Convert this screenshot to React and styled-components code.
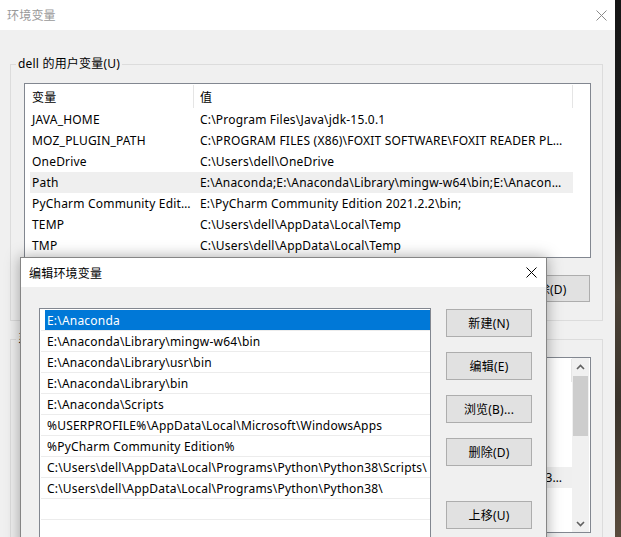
import React from 'react';
import styled, { createGlobalStyle } from 'styled-components';

const FONT = `"Noto Sans", "Noto Sans CJK SC", sans-serif`;

const Global = createGlobalStyle`
  html, body { margin: 0; padding: 0; }
  body { background: #2b2722; font-family: ${FONT}; font-size: 12px; letter-spacing: 0.2px; color: #000; }
  * { box-sizing: border-box; }
`;

const Desktop = styled.div`
  position: relative;
  width: 621px;
  height: 537px;
  overflow: hidden;
  display: flex;
  background: linear-gradient(180deg, #161616 0%, #1e1e1e 35%, #4a4136 55%, #3a332b 75%, #5a4c3d 100%);
`;

const MainWindow = styled.div`
  width: 615px;
  height: 537px;
  flex: none;
  background: #f0f0f0;
  display: flex;
  flex-direction: column;
`;

const TitleBar = styled.div`
  height: ${p => p.$h}px;
  flex: none;
  background: #fff;
  display: flex;
  align-items: center;
  justify-content: space-between;
  padding: 0 ${p => p.$pr}px 0 ${p => p.$pl}px;
  color: ${p => (p.$active ? '#000' : '#999')};
  font-size: 12px;
`;

const CloseGlyph = ({ color }) => (
  <svg width="11" height="11" viewBox="0 0 11 11">
    <path d="M0.5 0.5 L10.5 10.5 M10.5 0.5 L0.5 10.5" stroke={color} strokeWidth="1" fill="none" />
  </svg>
);

const MainBody = styled.div`
  flex: 1;
  display: flex;
  flex-direction: column;
  padding: 34px 12px 0 10px;
`;

const GroupBox = styled.div`
  margin-top: ${p => p.$mt}px;
  border: 1px solid #dcdcdc;
  padding: 0 11px ${p => p.$pb}px 13px;
  display: flex;
  flex-direction: column;
  flex: none;
`;

const GroupLabel = styled.div`
  align-self: flex-start;
  margin: -9px 0 0 -8px;
  padding: 0 2px;
  line-height: 16px;
  background: #f0f0f0;
`;

const ListBox = styled.div`
  margin-top: ${p => p.$mt}px;
  height: ${p => p.$h}px;
  border: 1px solid #828790;
  background: #fff;
  display: flex;
  overflow: hidden;
  flex: none;
`;

const ListContent = styled.div`
  flex: 1;
  min-width: 0;
  padding-left: 5px;
  display: flex;
  flex-direction: column;
`;

const Header = styled.div`
  height: 25px;
  flex: none;
  display: flex;
  align-items: center;
`;

const HeaderCell = styled.div`
  width: ${p => p.$w}px;
  height: 23px;
  padding-left: ${p => p.$pl}px;
  border-right: 1px solid #e5e5e5;
  display: flex;
  align-items: center;
`;

const VarRow = styled.div`
  height: 21px;
  flex: none;
  display: flex;
  align-items: center;
  align-self: flex-start;
  background: ${p => (p.$hl ? '#efefef' : 'transparent')};
`;

const Cell = styled.div`
  width: ${p => p.$w}px;
  padding-left: ${p => p.$pl}px;
  padding-right: ${p => p.$pr}px;
  white-space: nowrap;
  overflow: hidden;
  text-overflow: ellipsis;
`;

const ButtonRow = styled.div`
  margin-top: 17px;
  display: flex;
  justify-content: flex-end;
  padding-right: 1px;
`;

const WinButton = styled.button`
  width: ${p => p.$w}px;
  height: ${p => p.$h}px;
  margin-top: ${p => p.$mt || 0}px;
  border: 1px solid #adadad;
  background: #e1e1e1;
  font-family: ${FONT};
  font-size: 12px;
  letter-spacing: 0.2px;
  color: #000;
  padding: 0;
  flex: none;
`;

const ScrollBar = styled.div`
  width: 17px;
  flex: none;
  margin-right: 1px;
  background: #f0f0f0;
  display: flex;
  flex-direction: column;
`;

const ScrollArrow = styled.div`
  height: 17px;
  flex: none;
  display: flex;
  align-items: center;
  justify-content: center;
`;

const ScrollThumb = styled.div`
  height: 60px;
  margin: 1px 1px 0;
  background: #cdcdcd;
  flex: none;
`;

const ScrollTrack = styled.div`
  flex: 1;
`;

const Chevron = ({ up }) => (
  <svg width="9" height="6" viewBox="0 0 9 6">
    <path d={up ? 'M1 5 L4.5 1.5 L8 5' : 'M1 1 L4.5 4.5 L8 1'} stroke="#606060" strokeWidth="1.6" fill="none" />
  </svg>
);

const Dialog = styled.div`
  position: absolute;
  left: 20px;
  top: 257px;
  width: 527px;
  height: 310px;
  border: 1px solid #858585;
  background: #f0f0f0;
  box-shadow: 0 0 14px rgba(0, 0, 0, 0.35);
  display: flex;
  flex-direction: column;
`;

const DialogBody = styled.div`
  flex: 1;
  min-height: 0;
  display: flex;
  gap: 15px;
  padding: 21px 14px 0 18px;
`;

const PathList = styled.div`
  width: 392px;
  height: 250px;
  flex: none;
  border: 1px solid #828790;
  background: #fff;
  padding: 1px 0 0 1px;
  display: flex;
  flex-direction: column;
  overflow: hidden;
`;

const PathRow = styled.div`
  height: 21px;
  flex: none;
  padding-left: 4px;
  border-bottom: 1px solid #ececec;
  display: flex;
`;

const PathText = styled.div`
  flex: 1;
  padding-left: 2px;
  display: flex;
  align-items: center;
  white-space: nowrap;
  overflow: hidden;
  background: ${p => (p.$sel ? '#0078d7' : 'transparent')};
  color: ${p => (p.$sel ? '#fff' : '#000')};
`;

const ButtonCol = styled.div`
  width: 86px;
  flex: none;
  display: flex;
  flex-direction: column;
  gap: 15px;
  padding-top: 1px;
`;

const userVars = [
  ['JAVA_HOME', 'C:\\Program Files\\Java\\jdk-15.0.1'],
  ['MOZ_PLUGIN_PATH', 'C:\\PROGRAM FILES (X86)\\FOXIT SOFTWARE\\FOXIT READER PLUGINS\\'],
  ['OneDrive', 'C:\\Users\\dell\\OneDrive'],
  ['Path', 'E:\\Anaconda;E:\\Anaconda\\Library\\mingw-w64\\bin;E:\\Anaconda\\Library\\usr\\bin;'],
  ['PyCharm Community Edition', 'E:\\PyCharm Community Edition 2021.2.2\\bin;'],
  ['TEMP', 'C:\\Users\\dell\\AppData\\Local\\Temp'],
  ['TMP', 'C:\\Users\\dell\\AppData\\Local\\Temp'],
];

const sysVars = [
  ['ComSpec', 'C:\\WINDOWS\\system32\\cmd.exe'],
  ['DriverData', 'C:\\Windows\\System32\\Drivers\\DriverData'],
  ['NUMBER_OF_PROCESSORS', '8'],
  ['OS', 'Windows_NT'],
  ['Path', 'C:\\WINDOWS\\system32;C:\\WINDOWS;C:\\WINDOWS\\System32\\Wbem;C:\\WINDOWS\\System32\\WindowsPowerShell\\v1.0\\'],
  ['PATHEXT', '.COM;.EXE;.BAT;.CMD;.VBS;.VBE;.JS;.JSE;.WSF;.WSH;.MSC'],
  ['PROCESSOR_ARCHITECTURE', 'AMD64'],
];

const paths = [
  'E:\\Anaconda',
  'E:\\Anaconda\\Library\\mingw-w64\\bin',
  'E:\\Anaconda\\Library\\usr\\bin',
  'E:\\Anaconda\\Library\\bin',
  'E:\\Anaconda\\Scripts',
  '%USERPROFILE%\\AppData\\Local\\Microsoft\\WindowsApps',
  '%PyCharm Community Edition%',
  'C:\\Users\\dell\\AppData\\Local\\Programs\\Python\\Python38\\Scripts\\',
  'C:\\Users\\dell\\AppData\\Local\\Programs\\Python\\Python38\\',
  '',
  '',
  '',
];

function VarList({ rows, highlight, h, mt, scroll }) {
  return (
    <ListBox $h={h} $mt={mt}>
      <ListContent>
        <Header>
          <HeaderCell $w={164} $pl={2}>变量</HeaderCell>
          <HeaderCell $w={379} $pl={6}>值</HeaderCell>
        </Header>
        {rows.map(([n, v], i) => (
          <VarRow key={i} $hl={i === highlight}>
            <Cell $w={164} $pl={2} $pr={3}>{n}</Cell>
            <Cell $w={379} $pl={6} $pr={5}>{v}</Cell>
          </VarRow>
        ))}
      </ListContent>
      {scroll && (
        <ScrollBar>
          <ScrollArrow><Chevron up /></ScrollArrow>
          <ScrollThumb />
          <ScrollTrack />
          <ScrollArrow><Chevron /></ScrollArrow>
        </ScrollBar>
      )}
    </ListBox>
  );
}

export default function App() {
  return (
    <>
      <Global />
      <Desktop>
        <MainWindow>
          <TitleBar $h={30} $pl={7} $pr={8}>
            <span>环境变量</span>
            <CloseGlyph color="#8a8a8a" />
          </TitleBar>
          <MainBody>
            <GroupBox $mt={0} $pb={18}>
              <GroupLabel>dell 的用户变量(U)</GroupLabel>
              <VarList rows={userVars} highlight={3} h={175} mt={11} />
              <ButtonRow>
                <WinButton $w={88} $h={27}>删除(D)</WinButton>
              </ButtonRow>
            </GroupBox>
            <GroupBox $mt={18} $pb={18}>
              <GroupLabel>系统变量(S)</GroupLabel>
              <VarList rows={sysVars} highlight={4} h={176} mt={10} scroll />
            </GroupBox>
          </MainBody>
        </MainWindow>

        <Dialog>
          <TitleBar $h={29} $pl={8} $pr={9} $active>
            <span>编辑环境变量</span>
            <CloseGlyph color="#000" />
          </TitleBar>
          <DialogBody>
            <PathList>
              {paths.map((p, i) => (
                <PathRow key={i}>
                  <PathText $sel={i === 0}>{p}</PathText>
                </PathRow>
              ))}
            </PathList>
            <ButtonCol>
              <WinButton $w={86} $h={28}>新建(N)</WinButton>
              <WinButton $w={86} $h={28}>编辑(E)</WinButton>
              <WinButton $w={86} $h={28}>浏览(B)...</WinButton>
              <WinButton $w={86} $h={28}>删除(D)</WinButton>
              <WinButton $w={86} $h={28} $mt={20}>上移(U)</WinButton>
            </ButtonCol>
          </DialogBody>
        </Dialog>
      </Desktop>
    </>
  );
}
